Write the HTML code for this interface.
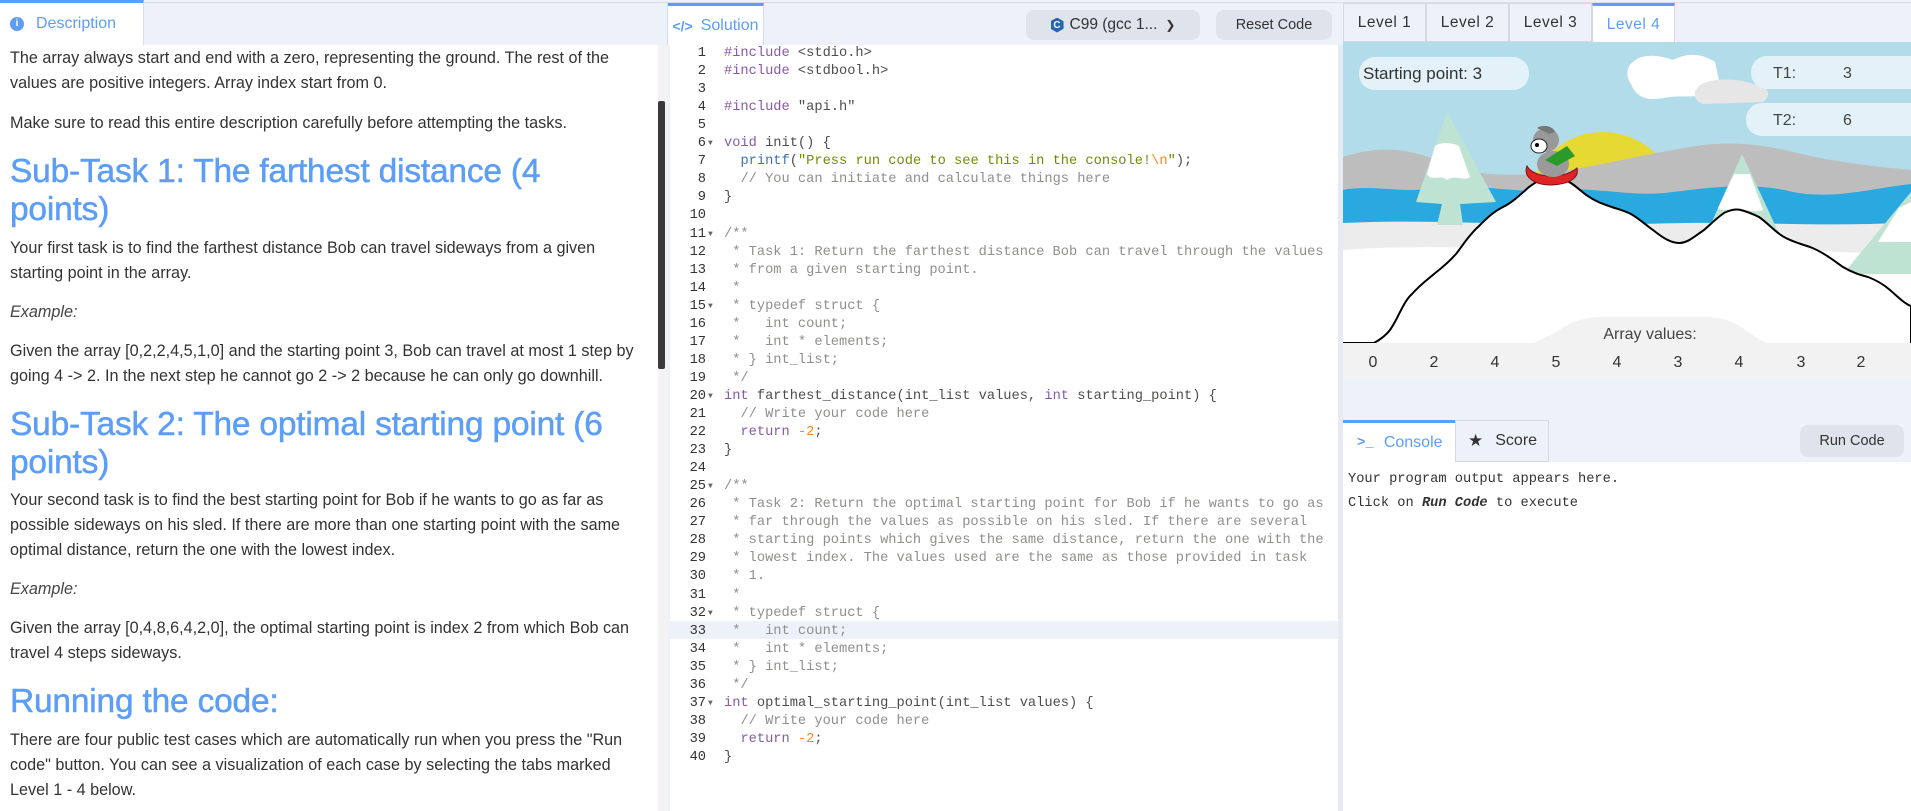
<!DOCTYPE html>
<html><head><meta charset="utf-8"><style>
*{margin:0;padding:0;box-sizing:border-box}
body{width:1911px;height:811px;overflow:hidden;background:#edf2fa;font-family:"Liberation Sans",sans-serif;position:relative}
.abs{position:absolute}
.topline{left:0;top:2px;width:1911px;height:1px;background:#d9dee6}
.tab{position:absolute;top:3px;height:42px;background:#edf2fa;border-right:1px solid #d9dee6;font-size:16px;color:#333;display:flex;align-items:center;justify-content:center}
.tab.act{background:#fff;border-top:3px solid #5c9ef7;color:#5c9ef7}
#left{left:0;top:45px;width:658px;height:766px;background:#fff;color:#333;font-size:16.2px;line-height:24.8px}
#left p,#left h2{position:absolute;left:10px;width:642px}
#left h2{font-size:33.5px;line-height:38px;color:#5c9ef7;font-weight:normal;letter-spacing:-0.2px;-webkit-text-stroke:0.5px #5c9ef7;width:618px}
#left i{color:#444}
#code{left:670px;top:45px;width:668px;height:766px;background:#fff;font-family:"Liberation Mono",monospace;font-size:13.7px;color:#4d4d4c}
.ln{position:absolute;left:0;width:36px;text-align:right;color:#333}
.cl{position:absolute;left:54px;white-space:pre}
.fold{position:absolute;left:38px;font-size:8px;color:#666}
.k{color:#8959a8}.c{color:#8e908c}.s{color:#718c00}.n{color:#f5871f}.f{color:#4271ae}
.btn{position:absolute;background:#dfe4ec;border-radius:8px;font-size:14.5px;color:#333;display:flex;align-items:center;justify-content:center}
.lv{position:absolute;top:3px;height:39px;width:83px;background:#edf2fa;border:1px solid #d4d9e1;font-size:15.5px;color:#333;display:flex;align-items:center;justify-content:center;letter-spacing:0.5px}
</style></head><body>
<div class="abs topline"></div>
<div class="tab act" style="left:0;width:144px;justify-content:flex-start;padding-left:10px;top:0;height:45px"><span style="display:inline-block;width:14px;height:14px;border-radius:50%;background:#5c9ef7;color:#fff;font-size:10px;font-weight:bold;text-align:center;line-height:14px;margin-right:12px">i</span>Description</div>
<div class="abs" style="left:144px;top:3px;width:524px;height:42px;border-right:1px solid #d9dee6"></div>

<div id="left" class="abs">
<p style="top:1px">The array always start and end with a zero, representing the ground. The rest of the values are positive integers. Array index start from 0.</p>
<p style="top:66px">Make sure to read this entire description carefully before attempting the tasks.</p>
<h2 style="top:108px">Sub-Task 1: The farthest distance (4 points)</h2>
<p style="top:191px">Your first task is to find the farthest distance Bob can travel sideways from a given starting point in the array.</p>
<p style="top:255px"><i>Example:</i></p>
<p style="top:294px">Given the array [0,2,2,4,5,1,0] and the starting point 3, Bob can travel at most 1 step by going 4 -&gt; 2. In the next step he cannot go 2 -&gt; 2 because he can only go downhill.</p>
<h2 style="top:361px">Sub-Task 2: The optimal starting point (6 points)</h2>
<p style="top:443px">Your second task is to find the best starting point for Bob if he wants to go as far as possible sideways on his sled. If there are more than one starting point with the same optimal distance, return the one with the lowest index.</p>
<p style="top:532px"><i>Example:</i></p>
<p style="top:571px">Given the array [0,4,8,6,4,2,0], the optimal starting point is index 2 from which Bob can travel 4 steps sideways.</p>
<h2 style="top:638px">Running the code:</h2>
<p style="top:683px">There are four public test cases which are automatically run when you press the "Run code" button. You can see a visualization of each case by selecting the tabs marked Level 1 - 4 below.</p>
</div>
<div class="abs" style="left:658px;top:45px;width:10px;height:766px;background:#f3f3f3"></div>
<div class="abs" style="left:658px;top:101px;width:7px;height:268px;background:#3a3a3a;border-radius:2px"></div>

<div class="tab act" style="left:668px;width:96px;top:3px;height:42px;font-size:16px"><span style="font-weight:bold;margin-right:8px;font-size:14px">&lt;/&gt;</span>Solution</div>
<div class="btn" style="left:1026px;top:10px;width:174px;height:30px;font-size:15.5px"><span style="display:inline-block;width:13px;height:15px;background:#2666b0;clip-path:polygon(50% 0,100% 25%,100% 75%,50% 100%,0 75%,0 25%);color:#fff;font-size:10px;font-weight:bold;text-align:center;line-height:15px;margin-right:6px">C</span>C99 (gcc 1... <span style="margin-left:8px;font-size:12px">&#10095;</span></div>
<div class="btn" style="left:1216px;top:10px;width:116px;height:30px">Reset Code</div>

<div id="code" class="abs">
<div class="abs" style="left:0;top:576px;width:668px;height:18px;background:#edf2fa"></div>
</div>
<div class="abs" style="left:1338px;top:45px;width:5px;height:766px;background:#e6ebf3"></div>

<div class="lv" style="left:1343px">Level 1</div>
<div class="lv" style="left:1426px">Level 2</div>
<div class="lv" style="left:1509px">Level 3</div>
<div class="lv" style="left:1592px;background:#fff;border-top:3px solid #5c9ef7;color:#5c9ef7;border-bottom:none;height:40px">Level 4</div>

<svg class="abs" style="left:1343px;top:42px" width="568" height="336" viewBox="0 0 568 336">
<rect width="568" height="336" fill="#b3dceb"/>
<circle cx="260" cy="165" r="75" fill="#e6d934"/>
<path d="M0 115 C60 95 90 120 130 130 C200 140 260 120 330 108 C370 100 400 98 450 110 C500 122 540 125 568 128 L568 180 L0 180Z" fill="#bdbdbd"/>
<path d="M0 148 C30 142 60 152 90 146 C130 140 170 152 210 148 C250 144 290 156 330 150 C370 145 410 140 450 150 C490 158 530 146 568 142 L568 200 L0 200Z" fill="#29a9e0"/>
<path d="M0 181 C100 176 200 186 300 182 C400 178 480 186 568 180 L568 300 L0 300Z" fill="#ececec"/>
<path d="M0 208 C100 200 200 212 300 204 C400 198 480 215 568 210 L568 336 L0 336Z" fill="#fff"/>
<polygon points="104,70 73,160 99,162 94,183 120,183 117,162 153,160" fill="#bfe3d3"/>
<path d="M92 104 C98 100 108 100 116 104 L127 135 C120 140 112 132 104 138 C98 132 88 140 84 132Z" fill="#fff"/>
<polygon points="399,112 360,200 440,200" fill="#bfe3d3"/>
<path d="M391 132 L407 132 L420 168 C410 172 400 165 392 170 C385 165 378 170 375 166Z" fill="#fff"/>
<polygon points="568,150 500,232 568,232" fill="#bfe3d3"/>
<path d="M556 166 L568 160 L568 200 L535 200Z" fill="#fff"/>
<path d="M0 301 L31 301 C40 296 44 292 47 288 C56 275 60 260 69 252 C78 242 84 238 91 232 C100 225 106 220 113 212 C120 203 126 193 135 185 C144 176 150 170 160 165 C170 160 178 152 186 145 C193 140 196 138 201 138 L222 138 C228 140 232 144 237 148 C246 156 254 160 263 163 C274 167 280 168 288 172 C298 178 304 184 310 188 C320 196 328 201 336 201 C345 201 352 194 361 188 C370 180 378 172 383 170 C390 167 394 167 398 168 C405 170 410 172 416 175 C426 182 432 190 441 195 C450 200 458 202 467 205 C480 210 490 218 500 225 C510 231 518 233 525 235 C533 238 540 242 547 248 C555 255 562 262 568 264 L568 336 L0 336Z" fill="#fff" stroke="#000" stroke-width="2"/>
<path d="M-2 302 L31 302" stroke="#000" stroke-width="2"/>
<path d="M190 301 C220 290 225 275 260 275 L360 275 C395 275 400 290 424 301Z" fill="#f2f2f2"/>
<rect x="0" y="301" width="568" height="35" fill="#f2f2f2"/>
<text x="307" y="297" font-family="Liberation Sans" font-size="16" fill="#444" text-anchor="middle">Array values:</text>
<g font-family="Liberation Sans" font-size="16" fill="#333" text-anchor="middle">
<text x="30" y="325">0</text><text x="91" y="325">2</text><text x="152" y="325">4</text><text x="213" y="325">5</text><text x="274" y="325">4</text><text x="335" y="325">3</text><text x="396" y="325">4</text><text x="458" y="325">3</text><text x="518" y="325">2</text>
</g>
<rect x="16" y="15" width="170" height="33" rx="16" fill="#e3f2f8"/>
<text x="20" y="37" font-family="Liberation Sans" font-size="17" fill="#333">Starting point: 3</text>
<path d="M290 20 C300 10 320 14 330 18 C345 10 360 12 372 20 L378 48 C365 58 340 52 320 56 C300 60 292 52 288 42 C282 34 284 24 290 20Z" fill="#fff"/>
<path d="M355 45 C365 35 395 36 410 42 C425 44 430 52 420 60 L360 62 C350 58 350 50 355 45Z" fill="#e6e6e6"/>
<rect x="408" y="14" width="175" height="33" rx="16" fill="#e3f2f8"/>
<rect x="403" y="61" width="180" height="33" rx="16" fill="#e3f2f8"/>
<g font-family="Liberation Sans" font-size="16" fill="#444"><text x="430" y="36">T1:</text><text x="500" y="36">3</text><text x="430" y="83">T2:</text><text x="500" y="83">6</text></g>
<path d="M184 124 C190 136 220 138 234 126 C236 134 230 142 208 143 C190 143 180 134 184 124Z" fill="#e02424" stroke="#7a1010" stroke-width="1"/>
<ellipse cx="210" cy="122" rx="16" ry="13" fill="#9a9a9a"/>
<path d="M202 118 L224 104 L232 114 L214 124Z" fill="#2a9a2a"/>
<ellipse cx="203" cy="98" rx="13" ry="12" fill="#999"/>
<ellipse cx="196" cy="104" rx="8" ry="7" fill="#fff" stroke="#222" stroke-width="1"/>
<circle cx="194" cy="103" r="2" fill="#000"/>
<path d="M194 86 C200 82 210 84 212 90 L206 92Z" fill="#777"/>
</svg>

<div class="abs" style="left:1343px;top:420px;width:112px;height:42px;background:#fff;border-top:3px solid #5c9ef7;display:flex;align-items:center;padding-left:14px;color:#5c9ef7;font-size:16px"><span style="font-family:'Liberation Mono';font-weight:bold;font-size:14px;margin-right:10px">&gt;_</span>Console</div>
<div class="abs" style="left:1455px;top:420px;width:94px;height:42px;border:1px solid #d4d9e1;display:flex;align-items:center;padding-left:12px;color:#333;font-size:16px"><span style="font-size:17px;margin-right:12px">&#9733;</span>Score</div>
<div class="btn" style="left:1800px;top:425px;width:104px;height:32px">Run Code</div>
<div class="abs" style="left:1343px;top:462px;width:568px;height:349px;background:#fff;font-family:'Liberation Mono',monospace;font-size:13.7px;color:#333;line-height:24px;padding:6px 5px">Your program output appears here.<br>Click on <b><i>Run Code</i></b> to execute</div>

<script>
const L=[
'<span class="k">#include</span> &lt;stdio.h&gt;',
'<span class="k">#include</span> &lt;stdbool.h&gt;',
'',
'<span class="k">#include</span> "api.h"',
'',
'<span class="k">void</span> init() {',
'  <span class="f">printf</span>(<span class="s">"Press run code to see this in the console!</span><span class="n">\\n</span><span class="s">"</span>);',
'  <span class="c">// You can initiate and calculate things here</span>',
'}',
'',
'<span class="c">/**</span>',
'<span class="c"> * Task 1: Return the farthest distance Bob can travel through the values</span>',
'<span class="c"> * from a given starting point.</span>',
'<span class="c"> *</span>',
'<span class="c"> * typedef struct {</span>',
'<span class="c"> *   int count;</span>',
'<span class="c"> *   int * elements;</span>',
'<span class="c"> * } int_list;</span>',
'<span class="c"> */</span>',
'<span class="k">int</span> farthest_distance(int_list values, <span class="k">int</span> starting_point) {',
'  <span class="c">// Write your code here</span>',
'  <span class="k">return</span> <span class="n">-2</span>;',
'}',
'',
'<span class="c">/**</span>',
'<span class="c"> * Task 2: Return the optimal starting point for Bob if he wants to go as</span>',
'<span class="c"> * far through the values as possible on his sled. If there are several</span>',
'<span class="c"> * starting points which gives the same distance, return the one with the</span>',
'<span class="c"> * lowest index. The values used are the same as those provided in task</span>',
'<span class="c"> * 1.</span>',
'<span class="c"> *</span>',
'<span class="c"> * typedef struct {</span>',
'<span class="c"> *   int count;</span>',
'<span class="c"> *   int * elements;</span>',
'<span class="c"> * } int_list;</span>',
'<span class="c"> */</span>',
'<span class="k">int</span> optimal_starting_point(int_list values) {',
'  <span class="c">// Write your code here</span>',
'  <span class="k">return</span> <span class="n">-2</span>;',
'}'];
const folds=[6,11,15,20,25,32,37];
let h='';
L.forEach((t,i)=>{const y=i*18.05;
h+=`<div class="ln" style="top:${y}px;line-height:18px">${i+1}</div>`;
if(folds.includes(i+1))h+=`<div class="fold" style="top:${y+4}px">&#9660;</div>`;
h+=`<div class="cl" style="top:${y}px;line-height:18px">${t}</div>`;});
const c=document.getElementById('code');c.insertAdjacentHTML('beforeend','<div class="abs" style="left:0;top:0;width:668px">'+h+'</div>');
</script>
</body></html>
